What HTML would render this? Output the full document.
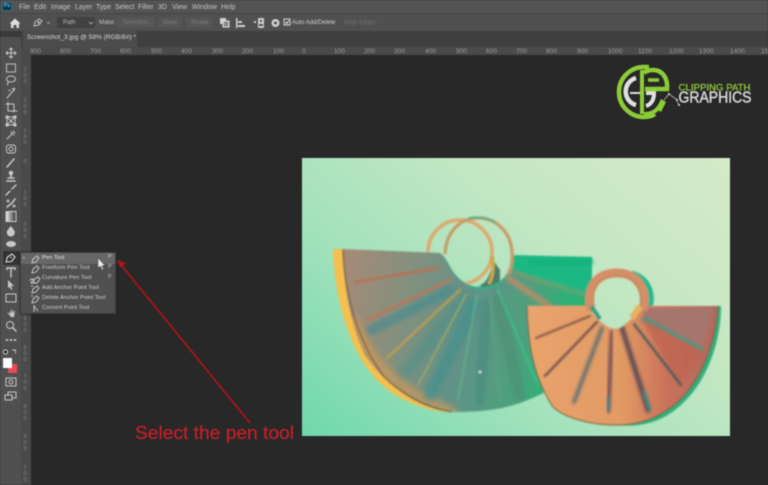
<!DOCTYPE html>
<html><head><meta charset="utf-8">
<style>
html,body{margin:0;padding:0;background:#282828}
#p{position:relative;width:768px;height:485px;overflow:hidden;background:#282828;font-family:"Liberation Sans",sans-serif;filter:blur(.4px)}
.a{position:absolute}
.t{position:absolute;white-space:nowrap;line-height:1}
.m{top:4px;font-size:7px;color:#c4c4c4}
.o{font-size:6px;color:#c4c4c4;top:20px}
.g{position:absolute;top:17px;height:11px;background:#565656;border-radius:1px}
.r{top:49px;font-size:6.6px;color:#9b9b9b}
.v{position:absolute;left:22px;width:6px;text-align:center;font-size:5.6px;line-height:6.2px;color:#858585}
.f{left:42px;font-size:5.8px;color:#cfcfcf}
</style></head><body>
<div id="p">
<div class="a" style="left:0;top:0;width:768px;height:13px;background:#535353"></div>
<div class="a" style="left:0;top:13px;width:768px;height:18px;background:#505050;border-top:1px solid #454545;box-sizing:border-box"></div>
<div class="a" style="left:0;top:31px;width:768px;height:16px;background:#3f3f3f"></div>
<div class="a" style="left:23px;top:31px;width:114px;height:16px;background:#4c4c4c"></div>
<div class="a" style="left:21px;top:47px;width:747px;height:8px;background:#4a4a4a"></div>
<div class="a" style="left:0;top:31px;width:21px;height:454px;background:#505050"></div>
<div class="a" style="left:0;top:31px;width:21px;height:6px;background:#3a3a3a"></div>
<div class="a" style="left:21px;top:47px;width:10px;height:438px;background:#4a4a4a"></div>

<div class="a" style="left:2px;top:2px;width:10px;height:9px;background:#0f3346;border:1px solid #2a6f8f;box-sizing:border-box"></div>
<div class="t" style="left:4px;top:4px;font-size:5px;font-weight:bold;color:#5fc0ea">Ps</div>
<div class="t m" style="left:19px">File</div>
<div class="t m" style="left:34px">Edit</div>
<div class="t m" style="left:51px">Image</div>
<div class="t m" style="left:75px">Layer</div>
<div class="t m" style="left:96px">Type</div>
<div class="t m" style="left:115px">Select</div>
<div class="t m" style="left:138px">Filter</div>
<div class="t m" style="left:158px">3D</div>
<div class="t m" style="left:172px">View</div>
<div class="t m" style="left:192px">Window</div>
<div class="t m" style="left:221px">Help</div>

<div class="g" style="left:57px;width:38px;background:#414141"></div>
<div class="g" style="left:117px;width:38px"></div>
<div class="g" style="left:158px;width:24px"></div>
<div class="g" style="left:186px;width:26px"></div>
<div class="t o" style="left:63px;color:#bbb">Path</div>
<div class="t o" style="left:99px">Make:</div>
<div class="t o" style="left:123px;color:#7c7c7c">Selection...</div>
<div class="t o" style="left:163px;color:#7c7c7c">Mask</div>
<div class="t o" style="left:191px;color:#7c7c7c">Shape</div>
<div class="t o" style="left:292px;color:#d0d0d0">Auto Add/Delete</div>
<div class="t o" style="left:344px;color:#6f6f6f">Align Edges</div>

<div class="t" style="left:27px;top:35px;font-size:6.6px;color:#d6d6d6">Screenshot_3.jpg @ 58% (RGB/8#) *</div>
<div class="t" style="left:129px;top:35px;font-size:6px;color:#8a8a8a">×</div>

<div class="t r" style="left:30px">900</div><div class="t r" style="left:60px">800</div><div class="t r" style="left:90px">700</div><div class="t r" style="left:120px">600</div><div class="t r" style="left:151px">500</div><div class="t r" style="left:181px">400</div><div class="t r" style="left:212px">300</div><div class="t r" style="left:242px">200</div><div class="t r" style="left:273px">100</div><div class="t r" style="left:302px">0</div><div class="t r" style="left:334px">100</div><div class="t r" style="left:364px">200</div><div class="t r" style="left:394px">300</div><div class="t r" style="left:425px">400</div><div class="t r" style="left:456px">500</div><div class="t r" style="left:486px">600</div><div class="t r" style="left:516px">700</div><div class="t r" style="left:546px">800</div><div class="t r" style="left:577px">900</div><div class="t r" style="left:608px">1000</div><div class="t r" style="left:638px">1100</div><div class="t r" style="left:669px">1200</div><div class="t r" style="left:699px">1300</div><div class="t r" style="left:730px">1400</div><div class="t r" style="left:761px">1500</div>

<div class="v" style="top:67px">3<br>0<br>0</div><div class="v" style="top:98px">2<br>0<br>0</div><div class="v" style="top:128px">1<br>0<br>0</div><div class="v" style="top:159px">0</div><div class="v" style="top:190px">1<br>0<br>0</div><div class="v" style="top:222px">2<br>0<br>0</div><div class="v" style="top:316px">5<br>0<br>0</div><div class="v" style="top:345px">6<br>0<br>0</div><div class="v" style="top:374px">7<br>0<br>0</div><div class="v" style="top:404px">8<br>0<br>0</div><div class="v" style="top:434px">9<br>0<br>0</div><div class="v" style="top:465px">1<br>0<br>0</div>

<!-- chrome icons -->
<svg class="a" style="left:0;top:0" width="768" height="485" viewBox="0 0 768 485">
<defs>
<linearGradient id="gr"><stop offset="0" stop-color="#eee"/><stop offset="1" stop-color="#333"/></linearGradient>
</defs>
<g fill="#dedede">
<path d="M15 18.500l5.500 5h-1.500v4.500h-2.500v-3h-3v3h-2.500v-4.500h-1.500z"/>
</g>
<g fill="none" stroke="#c4c4c4" stroke-width="1">
<path d="M34 26l1-4 4-3 3 2-3 4z"/><circle cx="38.500" cy="22.500" r=".7"/><path d="M47 22l1.500 1.500 1.500-1.500" stroke="#999"/>
<path d="M89 22l2 2 2-2" stroke="#999"/>
<rect x="284" y="19" width="6" height="6" stroke="#d8d8d8"/>
<path d="M285.500 22l1.300 1.500 2-3" stroke="#e8e8e8"/>
</g>
<g fill="#d0d0d0">
<rect x="220" y="18" width="6" height="6"/><rect x="223" y="21" width="6" height="6" fill="#8a8a8a" stroke="#e0e0e0" stroke-width="1"/>
<rect x="236" y="18" width="1.500" height="10"/><rect x="238" y="21" width="4" height="2"/><rect x="238" y="25" width="7" height="2"/>
<rect x="254" y="21" width="2" height="2"/><rect x="258" y="18" width="6" height="10" rx="1"/><rect x="260" y="20" width="2" height="2" fill="#505050"/><rect x="259" y="24" width="4" height="2" fill="#505050"/>
<circle cx="275.500" cy="23" r="4"/><circle cx="275.500" cy="23" r="1.500" fill="#505050"/>
</g>

<!-- tools -->
<g fill="none" stroke="#c8c8c8" stroke-width="1" stroke-linecap="round" stroke-linejoin="round">
<path d="M11 48v10M6 53h10M11 48l-1.500 1.500M11 48l1.500 1.500M11 58l-1.500-1.500M11 58l1.500-1.500M6 53l1.500-1.500M6 53l1.500 1.500M16 53l-1.500-1.500M16 53l-1.500 1.500"/>
<rect x="6.500" y="64" width="9" height="8" stroke-dasharray="1.500 1"/>
<ellipse cx="11" cy="79" rx="4.500" ry="3"/><path d="M8 82l-.5 3"/>
<path d="M7 98l6-7M14 88v3M12 89h3M9 90l1 1"/>
<path d="M8 102v9h9M6 104h8v8"/>
<rect x="7" y="117" width="8" height="8"/><path d="M7 117l8 8M15 117l-8 8"/><rect x="6" y="116" width="2" height="2"/><rect x="14" y="116" width="2" height="2"/><rect x="6" y="124" width="2" height="2"/><rect x="14" y="124" width="2" height="2"/>
<path d="M7 139l5-5M11 132l3 3M13 131l2 2"/>
<rect x="6.500" y="145" width="9" height="8" rx="2"/><circle cx="11" cy="149" r="2"/>
<path d="M7 167l7-8" stroke-width="1.500"/>
<path d="M7 181h8M8 178h6M11 178v-3" stroke-width="1.600"/><circle cx="11" cy="173" r="1.800" fill="#c8c8c8"/>
<path d="M6 195l4-4M12 189l4-4" stroke-width="1.400"/>
<path d="M7 207l5-4 3-4" stroke-width="1.600"/><circle cx="8" cy="201" r="1"/><circle cx="14" cy="206" r="1"/>
<path d="M10.800 226c3 3.500 4 5 4 6.500a4 4 0 0 1-8 0c0-1.500 1-3 4-6.500z" fill="#c8c8c8" stroke="none"/>
<ellipse cx="11" cy="244" rx="5" ry="3" fill="#c8c8c8" stroke="none"/>
<path d="M7 268h8M11 268v9M7 268v1.500M15 268v1.500" stroke-width="1.400"/>
<path d="M8 280l6 6h-3l1.500 3.500-1 .5-2-3-1.500 1z" fill="#c8c8c8" stroke="none"/>
<rect x="6" y="294" width="10" height="8"/>
<path d="M7 312l4 5h3l1-6-1 0-1 3v-5l-1 4v-5l-1 5-1-4v5l-1-1z" fill="#c8c8c8" stroke="none"/>
<circle cx="10" cy="325" r="3.500"/><path d="M13 328l3 3" stroke-width="1.500"/>
<path d="M6.500 340h1M10.500 340h1M14.500 340h1" stroke-width="1.800"/>
<path d="M12.500 350l3 0v3" stroke-width=".9"/>
<rect x="6" y="378" width="10" height="8"/><circle cx="11" cy="382" r="2"/>
<rect x="8" y="392" width="8" height="6"/><rect x="5" y="395" width="7" height="5" fill="#505050"/>
</g>
<rect x="6" y="211.500" width="10" height="10" fill="url(#gr)"/>
<rect x="6" y="211.500" width="10" height="10" fill="none" stroke="#ccc"/>
<circle cx="5.500" cy="352" r="2" fill="#111" stroke="#ddd"/>
</svg>

<!-- pen tool selected slot -->
<div class="a" style="left:3px;top:251px;width:17px;height:14px;background:#333"></div>
<svg class="a" style="left:0;top:250px" width="21" height="16"><path d="M6 12l1.500-5 4.500-3 3 3-3.500 4.500z" fill="none" stroke="#ddd" stroke-width="1.100"/><circle cx="11" cy="7.500" r=".8" fill="#ddd"/></svg>

<div class="a" style="left:8px;top:364px;width:9px;height:9px;background:#ea4a56"></div>
<div class="a" style="left:3px;top:358px;width:9px;height:10px;background:#fff"></div>

<!-- image -->
<div class="a" style="left:302px;top:158px;width:428px;height:278px;overflow:hidden;background:linear-gradient(40deg,#6fd8ac 0%,#a4e2bd 35%,#c4e7c3 65%,#d6eac8 100%)">
<svg width="428" height="278" viewBox="302 158 428 278" style="position:absolute;left:0;top:0">
<defs>
<filter id="b1" x="-20%" y="-20%" width="140%" height="140%"><feGaussianBlur stdDeviation=".7"/></filter>
<filter id="b2" x="-20%" y="-20%" width="140%" height="140%"><feGaussianBlur stdDeviation="1.500"/></filter>
<filter id="b4" x="-20%" y="-20%" width="140%" height="140%"><feGaussianBlur stdDeviation="4"/></filter>
<linearGradient id="bag1" gradientUnits="userSpaceOnUse" x1="342" y1="280" x2="560" y2="330"><stop offset="0" stop-color="#a48a76"/><stop offset=".3" stop-color="#83907f"/><stop offset=".6" stop-color="#5f9288"/><stop offset=".85" stop-color="#4ea07c"/><stop offset="1" stop-color="#2fb077"/></linearGradient>
<linearGradient id="bag2" gradientUnits="userSpaceOnUse" x1="527" y1="340" x2="716" y2="340"><stop offset="0" stop-color="#e9a36c"/><stop offset=".5" stop-color="#e29a64"/><stop offset=".75" stop-color="#c9705a"/><stop offset="1" stop-color="#ad6a5e"/></linearGradient>
<clipPath id="c1"><path d="M342 249L440 253C445 256 447 262 452 270C460 282 470 287 480 287C495 287 505 280 510 268L592 296V330L545 392C515 408 490 412 452 412C420 410 385 385 365 355C350 325 344 285 342 249z"/></clipPath>
<clipPath id="c2"><path d="M527 306H586C592 313 600 322 608 327Q617 331 623 326C630 320 640 312 646 306H718C716 345 700 380 680 400C660 418 640 425 617 425C590 425 565 418 553 407C532 375 528 340 527 306z"/></clipPath>
</defs>
<g filter="url(#b1)">
<!-- back ring -->
<ellipse cx="460" cy="252" rx="32" ry="32" fill="none" stroke="#dda86c" stroke-width="3.500"/>
<path d="M478 286C486 284 491 275 493 260L500 270L500 285L490 288z" fill="#4f7a66"/>
<path d="M489 284C493 276 494 266 492 256" fill="none" stroke="#c9a84f" stroke-width="3.500"/>
<!-- back green -->
<path d="M512 255L592 257V308H530L510 290z" fill="#1cb884"/>
<!-- yellow side -->
<path d="M333 249C334 290 345 335 365 365C385 395 415 408 445 412H456C420 410 385 385 365 355C350 325 344 285 343 249z" fill="#f5c04d"/>
<!-- bag 1 -->
<path d="M342 249L440 253C445 256 447 262 452 270C460 282 470 287 480 287C495 287 505 280 510 268L592 296V330L545 392C515 408 490 412 452 412C420 410 385 385 365 355C350 325 344 285 342 249z" fill="url(#bag1)"/>
<g clip-path="url(#c1)" fill="none" stroke-linecap="round">
<path d="M352 320C365 355 395 392 452 412" stroke="#d49a58" stroke-width="10" opacity=".8" filter="url(#b4)"/>
<path d="M352 262L440 262" stroke="#5f9690" stroke-width="14" opacity=".65" filter="url(#b4)"/>
<path d="M372 330L450 290" stroke="#4b8c90" stroke-width="10" opacity=".7" filter="url(#b2)"/>
<path d="M405 372L464 300" stroke="#4a9088" stroke-width="12" opacity=".55" filter="url(#b4)"/>
<path d="M430 395L474 305" stroke="#3f8f8f" stroke-width="12" opacity=".6" filter="url(#b2)"/>
<path d="M478 400L488 305" stroke="#4a8a80" stroke-width="12" opacity=".55" filter="url(#b2)"/>
<path d="M520 395L498 300" stroke="#4f8a72" stroke-width="12" opacity=".5" filter="url(#b2)"/>
<path d="M355 282L438 268" stroke="#b8704f" stroke-width="2.500" filter="url(#b1)"/>
<path d="M367 320L450 280" stroke="#bd7453" stroke-width="2.500" filter="url(#b1)"/>
<path d="M387 358L460 290" stroke="#c4a04a" stroke-width="2" filter="url(#b1)"/>
<path d="M418 385L466 295" stroke="#a0ad62" stroke-width="1.500" filter="url(#b1)"/>
<path d="M458 400L477 295" stroke="#69b688" stroke-width="1.300" filter="url(#b1)"/>
<path d="M500 402L490 298" stroke="#5aa582" stroke-width="1.300" filter="url(#b1)"/>
<path d="M538 385L498 290" stroke="#3cc088" stroke-width="1.800" filter="url(#b1)"/>
<path d="M447 256C452 270 465 286 480 287C497 287 508 276 511 262" stroke="#29b088" stroke-width="5"/>
</g>
<path d="M343 250C345 300 360 345 385 378C405 396 425 407 452 412" fill="none" stroke="#6c4a2a" stroke-width="1"/>
<!-- green flap rays -->
<g fill="none" stroke-linecap="round" filter="url(#b2)">
<path d="M512 272L590 296" stroke="#7ea06e" stroke-width="4" opacity=".7"/>
<path d="M508 278L552 308" stroke="#c98a68" stroke-width="6" opacity=".8"/>
<path d="M530 262L590 262" stroke="#12b27c" stroke-width="6"/>
</g>
<!-- front ring -->
<path d="M445 254C446 232 460 218 478 218C497 218 511 233 512 252C513 262 511 268 508 274" fill="none" stroke="#c79a68" stroke-width="3.200"/>
<path d="M468 219C472 217 485 216 495 222" fill="none" stroke="#3fae88" stroke-width="1.800"/>
<circle cx="480" cy="372" r="1.500" fill="#cfd8d8"/>

<!-- bag 2 back handle -->
<path d="M632 273C648 278 654 292 650 308" fill="none" stroke="#22b98f" stroke-width="5"/>
<path d="M718 306C716 345 700 380 680 400C660 418 640 425 617 425C645 428 666 420 684 402C705 382 721 345 721 306z" fill="#2fae7a"/>
<!-- bag 2 -->
<path d="M527 306H586C592 313 600 322 608 327Q617 331 623 326C630 320 640 312 646 306H718C716 345 700 380 680 400C660 418 640 425 617 425C590 425 565 418 553 407C532 375 528 340 527 306z" fill="url(#bag2)"/>
<g clip-path="url(#c2)" fill="none" stroke-linecap="round">
<path d="M646 308H714L700 352L640 322z" fill="#a5766e" filter="url(#b2)"/>
<path d="M645 325L680 385L702 352L650 320z" fill="#bf6550" opacity=".75" filter="url(#b2)"/>
<path d="M536 338L590 316" stroke="#6e4a45" stroke-width="1.800" filter="url(#b1)"/>
<path d="M545 376L597 322" stroke="#5d4a50" stroke-width="2.300" filter="url(#b1)"/>
<path d="M574 402L602 328" stroke="#4f6a72" stroke-width="3.500" filter="url(#b2)"/>
<path d="M608 411L612 332" stroke="#6a4a55" stroke-width="4" filter="url(#b2)"/>
<path d="M607 410L609 398" stroke="#2f8a90" stroke-width="5" filter="url(#b2)"/>
<path d="M648 410L622 328" stroke="#5a4a52" stroke-width="5" filter="url(#b2)"/>
<path d="M650 410L644 392" stroke="#3a8f80" stroke-width="3" filter="url(#b1)"/>
<path d="M681 385L634 324" stroke="#3d5a5c" stroke-width="2.300" filter="url(#b1)"/>
<path d="M702 349L644 318" stroke="#26a184" stroke-width="2.300" filter="url(#b1)"/>
</g>
<path d="M527 306C528 340 532 375 553 407C565 418 590 425 617 425C640 425 660 418 680 400C700 380 716 345 718 306" fill="none" stroke="#6a5b3c" stroke-width="1"/>
<!-- handle -->
<path d="M591 310C586 288 596 273 617 273C638 273 648 290 643 310" fill="none" stroke="#d48e68" stroke-width="9"/>
<path d="M594 306C590 290 598 276 617 275C634 275 644 290 640 306" fill="none" stroke="#b8925a" stroke-width="1"/>
<path d="M640 306L632 318" stroke="#e8b05f" stroke-width="6"/>
<path d="M591 306L600 319" stroke="#3d9c85" stroke-width="4"/>
</g>
</svg>
</div>

<!-- flyout -->
<div class="a" style="left:20px;top:252px;width:96px;height:62px;background:#505050;border:1px solid #3f3f3f;box-sizing:border-box;box-shadow:0 0 2px #222"></div>
<div class="a" style="left:21px;top:253px;width:94px;height:11px;background:#676767"></div>
<div class="t" style="left:23px;top:256px;font-size:4.500px;color:#e4e4e4">▪</div>
<div class="t f" style="top:256px;color:#e6e6e6">Pen Tool</div>
<div class="t f" style="top:266px">Freeform Pen Tool</div>
<div class="t f" style="top:276px">Curvature Pen Tool</div>
<div class="t f" style="top:286px">Add Anchor Point Tool</div>
<div class="t f" style="top:296px">Delete Anchor Point Tool</div>
<div class="t f" style="top:306px">Convert Point Tool</div>
<div class="t" style="left:108px;top:255px;font-size:5.500px;color:#cfcfcf">P</div>
<div class="t" style="left:108px;top:265px;font-size:5.500px;color:#bbb">P</div>
<div class="t" style="left:108px;top:275px;font-size:5.500px;color:#bbb">P</div>
<svg class="a" style="left:28px;top:252px" width="14" height="62" fill="none" stroke="#cfcfcf" stroke-width=".9">
<path d="M4 11l1-4 4-3 2 2-3 4z"/><path d="M4 21l1-4 4-3 2 2-3 4z"/><path d="M3 31l2-3 5-3 2 2-3 4zM2 29a2 2 0 1 1 2 2"/><path d="M4 41l1-4 4-3 2 2-3 4zM3 34h2"/><path d="M4 51l1-4 4-3 2 2-3 4zM3 44h2"/><path d="M6 53v7M6 54l4 5"/>
</svg>
<svg class="a" style="left:97px;top:258px" width="9" height="13"><path d="M1 0l0 10 2.500-2 1.500 4 1.500-.7-1.500-3.500 3 0z" fill="#eee" stroke="#333" stroke-width=".4"/></svg>

<!-- logo -->
<svg class="a" style="left:610px;top:60px" width="150" height="64" viewBox="610 60 150 64">
<path d="M644 67a25 25 0 1 0 0 50" fill="none" stroke="#8ccd35" stroke-width="4.500"/>
<path d="M644 67h5M644 117c4 0 8-1 11-3" fill="none" stroke="#8ccd35" stroke-width="4.500"/>
<path d="M636 78a14 14 0 0 0 0 27" fill="none" stroke="#e0e0e0" stroke-width="4.500"/>
<path d="M630 93h14" stroke="#e0e0e0" stroke-width="2"/>
<path d="M646 93h8c0 6-2 11-8 13" fill="none" stroke="#e0e0e0" stroke-width="4"/>
<path d="M645 89h22c1-10-4-19-14-19c-6 0-8 2-9 3" fill="none" stroke="#8ccd35" stroke-width="4.500"/>
<path d="M642 70v44" stroke="#8ccd35" stroke-width="4"/>
<path d="M648 80h11" stroke="#8ccd35" stroke-width="3.500"/>
<path d="M644 114c8 0 12-3 15-7" fill="none" stroke="#8ccd35" stroke-width="4"/>
<path d="M661 99l5 3-5 10-5-3z" fill="#8ccd35"/>
<path d="M664 100l5-6 7 5 3 6" fill="none" stroke="#bdbdbd" stroke-width=".8"/>
<circle cx="669" cy="94" r="1" fill="#ddd"/><circle cx="677" cy="100" r="1" fill="#ddd"/><circle cx="679" cy="105" r="1" fill="#ddd"/>
<text x="678.500" y="90.500" font-family="'Liberation Sans',sans-serif" font-size="9" fill="#8fc93a" stroke="#8fc93a" stroke-width=".25" textLength="72" lengthAdjust="spacingAndGlyphs">CLIPPING PATH</text>
<text x="678.500" y="102.500" font-family="'Liberation Sans',sans-serif" font-size="15.500" fill="#d8d8d8" stroke="#d8d8d8" stroke-width=".45" textLength="73" lengthAdjust="spacingAndGlyphs">GRAPHICS</text>
</svg>

<!-- arrow -->
<svg class="a" style="left:0;top:0" width="768" height="485">
<path d="M250 423L122 266" stroke="#a8141c" stroke-width="1.800" fill="none"/>
<path d="M117 260l9 3-5.500 4.500z" fill="#b8141c"/>
<text x="135" y="439" font-family="'Liberation Sans',sans-serif" font-size="18.500" fill="#c2202a" stroke="#c2202a" stroke-width=".25" textLength="159" lengthAdjust="spacingAndGlyphs">Select the pen tool</text>
</svg>
</div>
</body></html>
